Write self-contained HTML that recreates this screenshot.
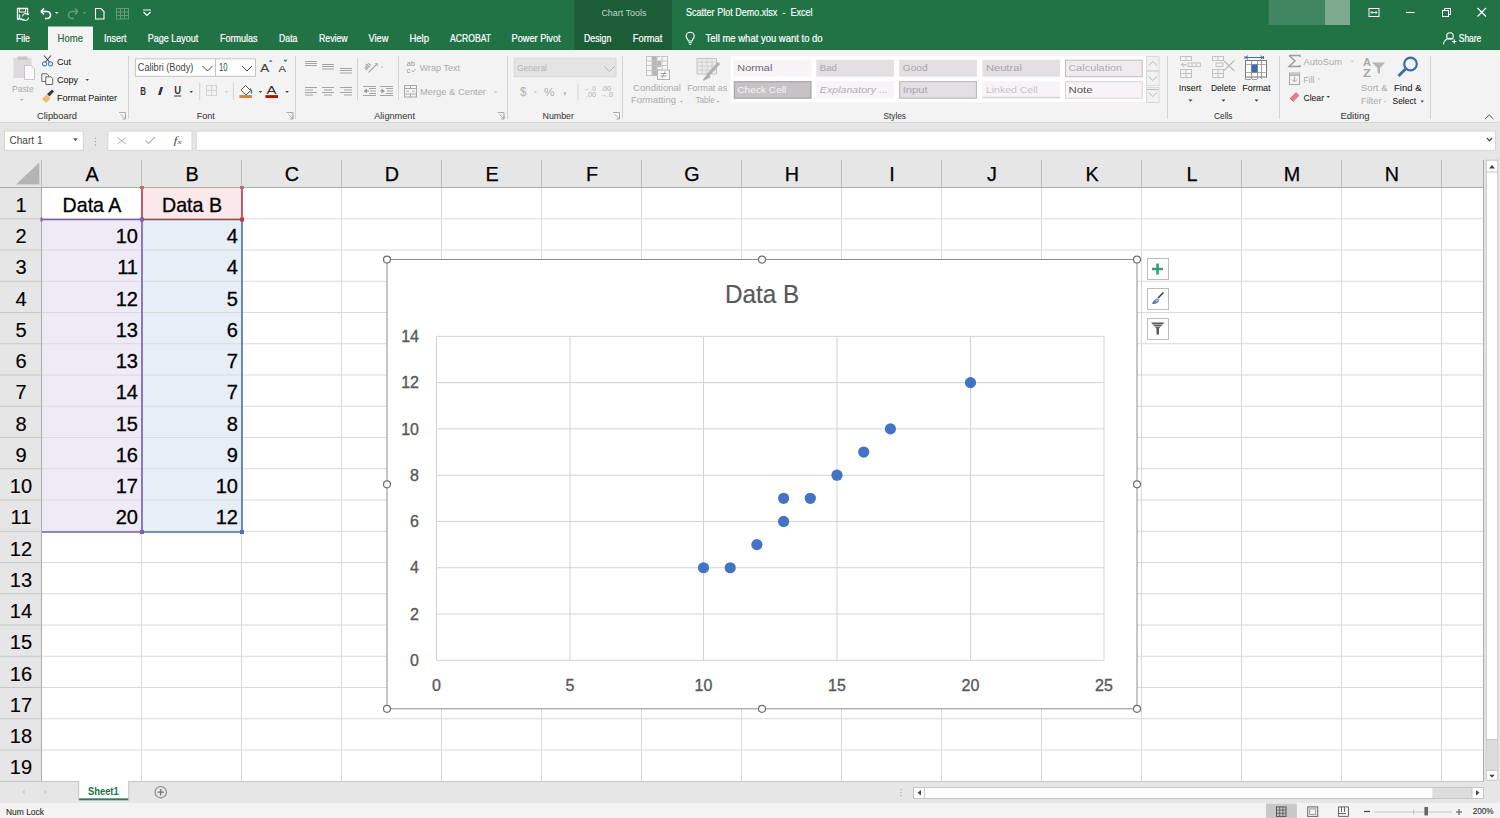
<!DOCTYPE html>
<html><head><meta charset="utf-8"><title>Excel</title>
<style>html,body{margin:0;padding:0;background:#fff;overflow:hidden}svg{display:block}text{font-family:"Liberation Sans",sans-serif}</style>
</head><body>
<svg width="1500" height="818" viewBox="0 0 1500 818">
<rect x="0" y="0" width="1500" height="50" fill="#217346" />
<rect x="574.3" y="0" width="97.5" height="50" fill="#1C5D38" />
<text x="601.4" y="16" font-size="9.88" fill="#BFD8C9" textLength="45" lengthAdjust="spacingAndGlyphs">Chart Tools</text>
<text x="686" y="16" font-size="10.47" fill="#FFFFFF" stroke="#FFFFFF" stroke-width="0.15" textLength="126.5" lengthAdjust="spacingAndGlyphs">Scatter Plot Demo.xlsx  -  Excel</text>
<rect x="48" y="26.5" width="45" height="23.5" fill="#F3F3F3" />
<text x="15.9" y="41.8" font-size="10.76" fill="#FFFFFF" stroke="#FFFFFF" stroke-width="0.2" textLength="14.0" lengthAdjust="spacingAndGlyphs">File</text>
<text x="57.5" y="41.8" font-size="10.76" fill="#2E6B47" stroke="#2E6B47" stroke-width="0.2" textLength="25.5" lengthAdjust="spacingAndGlyphs">Home</text>
<text x="104" y="41.8" font-size="10.76" fill="#FFFFFF" stroke="#FFFFFF" stroke-width="0.2" textLength="22.4" lengthAdjust="spacingAndGlyphs">Insert</text>
<text x="147.8" y="41.8" font-size="10.76" fill="#FFFFFF" stroke="#FFFFFF" stroke-width="0.2" textLength="50.4" lengthAdjust="spacingAndGlyphs">Page Layout</text>
<text x="219.9" y="41.8" font-size="10.76" fill="#FFFFFF" stroke="#FFFFFF" stroke-width="0.2" textLength="37.7" lengthAdjust="spacingAndGlyphs">Formulas</text>
<text x="279" y="41.8" font-size="10.76" fill="#FFFFFF" stroke="#FFFFFF" stroke-width="0.2" textLength="18.4" lengthAdjust="spacingAndGlyphs">Data</text>
<text x="319" y="41.8" font-size="10.76" fill="#FFFFFF" stroke="#FFFFFF" stroke-width="0.2" textLength="28.6" lengthAdjust="spacingAndGlyphs">Review</text>
<text x="368.6" y="41.8" font-size="10.76" fill="#FFFFFF" stroke="#FFFFFF" stroke-width="0.2" textLength="19.8" lengthAdjust="spacingAndGlyphs">View</text>
<text x="409.4" y="41.8" font-size="10.76" fill="#FFFFFF" stroke="#FFFFFF" stroke-width="0.2" textLength="19.6" lengthAdjust="spacingAndGlyphs">Help</text>
<text x="450" y="41.8" font-size="10.76" fill="#FFFFFF" stroke="#FFFFFF" stroke-width="0.2" textLength="41" lengthAdjust="spacingAndGlyphs">ACROBAT</text>
<text x="511.6" y="41.8" font-size="10.76" fill="#FFFFFF" stroke="#FFFFFF" stroke-width="0.2" textLength="49.0" lengthAdjust="spacingAndGlyphs">Power Pivot</text>
<text x="583.9" y="41.8" font-size="10.76" fill="#FFFFFF" stroke="#FFFFFF" stroke-width="0.2" textLength="27.4" lengthAdjust="spacingAndGlyphs">Design</text>
<text x="632.8" y="41.8" font-size="10.76" fill="#FFFFFF" stroke="#FFFFFF" stroke-width="0.2" textLength="29.5" lengthAdjust="spacingAndGlyphs">Format</text>
<text x="705.6" y="41.8" font-size="10.76" fill="#FFFFFF" stroke="#FFFFFF" stroke-width="0.2" textLength="117.0" lengthAdjust="spacingAndGlyphs">Tell me what you want to do</text>
<text x="1458.8" y="41.8" font-size="10.76" fill="#FFFFFF" stroke="#FFFFFF" stroke-width="0.2" textLength="22.5" lengthAdjust="spacingAndGlyphs">Share</text>
<rect x="0" y="50" width="1500" height="72" fill="#F3F3F3" />
<line x1="0" y1="122.5" x2="1500" y2="122.5" stroke="#D5D5D5" stroke-width="1" />
<line x1="128.5" y1="56" x2="128.5" y2="119" stroke="#D4D4D4" stroke-width="1" />
<line x1="295.5" y1="56" x2="295.5" y2="119" stroke="#D4D4D4" stroke-width="1" />
<line x1="507.5" y1="56" x2="507.5" y2="119" stroke="#D4D4D4" stroke-width="1" />
<line x1="622.5" y1="56" x2="622.5" y2="119" stroke="#D4D4D4" stroke-width="1" />
<line x1="1167.5" y1="56" x2="1167.5" y2="119" stroke="#D4D4D4" stroke-width="1" />
<line x1="1279.5" y1="56" x2="1279.5" y2="119" stroke="#D4D4D4" stroke-width="1" />
<line x1="1430.5" y1="56" x2="1430.5" y2="119" stroke="#D4D4D4" stroke-width="1" />
<text x="37" y="118.6" font-size="9.88" fill="#3A3A3A" stroke="#3A3A3A" stroke-width="0.06" textLength="40" lengthAdjust="spacingAndGlyphs">Clipboard</text>
<text x="196.8" y="118.6" font-size="9.88" fill="#3A3A3A" stroke="#3A3A3A" stroke-width="0.06" textLength="18.0" lengthAdjust="spacingAndGlyphs">Font</text>
<text x="374.2" y="118.6" font-size="9.88" fill="#3A3A3A" stroke="#3A3A3A" stroke-width="0.06" textLength="40.8" lengthAdjust="spacingAndGlyphs">Alignment</text>
<text x="542.5" y="118.6" font-size="9.88" fill="#3A3A3A" stroke="#3A3A3A" stroke-width="0.06" textLength="31.5" lengthAdjust="spacingAndGlyphs">Number</text>
<text x="883.4" y="118.6" font-size="9.88" fill="#3A3A3A" stroke="#3A3A3A" stroke-width="0.06" textLength="22.6" lengthAdjust="spacingAndGlyphs">Styles</text>
<text x="1214" y="118.6" font-size="9.88" fill="#3A3A3A" stroke="#3A3A3A" stroke-width="0.06" textLength="18.5" lengthAdjust="spacingAndGlyphs">Cells</text>
<text x="1340.5" y="118.6" font-size="9.88" fill="#3A3A3A" stroke="#3A3A3A" stroke-width="0.06" textLength="29.0" lengthAdjust="spacingAndGlyphs">Editing</text>
<path d="M22 19 H17.5 V8.5 H27.5 V14" fill="none" stroke="#FFFFFF" stroke-width="1.3" />
<rect x="19.5" y="8.5" width="6" height="3.5" fill="none" stroke="#FFFFFF" stroke-width="1" />
<line x1="19.5" y1="14.5" x2="19.5" y2="19" stroke="#FFFFFF" stroke-width="1.3" />
<path d="M22.5 16.5 a3 3 0 0 1 5.5 -1.5 M28.5 17.5 a3 3 0 0 1 -5.5 1.5" fill="none" stroke="#FFFFFF" stroke-width="1.1" />
<path d="M27 13.5 L28.5 15.5 L29.5 13.5 Z M24 20.5 L22.5 18.5 L21.5 20.5 Z" fill="#FFFFFF" />
<path d="M41 11.5 L44 8.5 M41 11.5 L44 14.5 M41 11.5 H47 a3.5 3.5 0 0 1 0 7 H45" fill="none" stroke="#FFFFFF" stroke-width="1.6" />
<path d="M55 12 L58.5 12 L56.75 14 Z" fill="#FFFFFF" />
<path d="M78 11.5 L75 8.5 M78 11.5 L75 14.5 M78 11.5 H72 a3.5 3.5 0 0 0 0 7 H74" fill="none" stroke="#5E9E79" stroke-width="1.6" />
<path d="M83 12 L86 12 L84.5 14 Z" fill="#5E9E79" />
<path d="M95.5 8.5 H101 L104 11.5 V19 H95.5 Z" fill="none" stroke="#FFFFFF" stroke-width="1.1" />
<rect x="116.5" y="8.5" width="12" height="10.5" fill="none" stroke="#5E9E79" stroke-width="1" />
<line x1="116.5" y1="12" x2="128.5" y2="12" stroke="#5E9E79" stroke-width="1" />
<line x1="116.5" y1="15.5" x2="128.5" y2="15.5" stroke="#5E9E79" stroke-width="1" />
<line x1="120.5" y1="8.5" x2="120.5" y2="19" stroke="#5E9E79" stroke-width="1" />
<line x1="124.5" y1="8.5" x2="124.5" y2="19" stroke="#5E9E79" stroke-width="1" />
<line x1="143" y1="10" x2="151" y2="10" stroke="#FFFFFF" stroke-width="1" />
<path d="M143.5 12 L147 15.5 L150.5 12" fill="none" stroke="#FFFFFF" stroke-width="1.2" />
<rect x="1268.7" y="0" width="56.3" height="25" fill="#3F8661" />
<rect x="1325" y="0" width="25" height="25" fill="#7DAA8F" />
<rect x="1369" y="8.5" width="10" height="8" fill="none" stroke="#FFFFFF" stroke-width="1" />
<path d="M1371 12.5 h6 M1371 12.5 l1.5 -1.5 M1371 12.5 l1.5 1.5 M1377 12.5 l-1.5 -1.5 M1377 12.5 l-1.5 1.5" fill="none" stroke="#FFFFFF" stroke-width="0.8" />
<line x1="1406" y1="12.5" x2="1414.5" y2="12.5" stroke="#FFFFFF" stroke-width="1.1" />
<rect x="1442.5" y="10.5" width="6" height="6" fill="none" stroke="#FFFFFF" stroke-width="1" />
<path d="M1444.5 10.5 V8.5 H1450.5 V14.5 H1448.5" fill="none" stroke="#FFFFFF" stroke-width="1" />
<path d="M1477.5 8 L1486 16.5 M1486 8 L1477.5 16.5" fill="none" stroke="#FFFFFF" stroke-width="1.2" />
<path d="M688.3 41 C688.3 39.3 686.2 38.3 686.2 36.2 A4 4 0 0 1 694.2 36.2 C694.2 38.3 692.1 39.3 692.1 41 Z" fill="none" stroke="#FFFFFF" stroke-width="1.1" />
<line x1="688.5" y1="42.7" x2="691.9" y2="42.7" stroke="#FFFFFF" stroke-width="1" />
<line x1="689.2" y1="44.3" x2="691.2" y2="44.3" stroke="#FFFFFF" stroke-width="1" />
<circle cx="1450" cy="36" r="3.3" fill="none" stroke="#FFFFFF" stroke-width="1.1"/>
<path d="M1443.5 44.5 a6.5 6.5 0 0 1 9.5 -5.5" fill="none" stroke="#FFFFFF" stroke-width="1.1" />
<path d="M1452 41.5 h4.5 M1454.25 39.25 v4.5" fill="none" stroke="#FFFFFF" stroke-width="1" />
<rect x="13.5" y="58" width="18" height="20" fill="#DDD9DD" />
<rect x="17.5" y="56.5" width="10" height="3.5" fill="#C9C5C9" />
<path d="M24.5 65.5 H31 L34.5 69 V79.5 H24.5 Z" fill="#FBF8FB" stroke="#C9C5C9" stroke-width="1" />
<text x="12" y="91.5" font-size="9.16" fill="#ABABAB" textLength="21.7" lengthAdjust="spacingAndGlyphs">Paste</text>
<path d="M20 99 L23.5 99 L21.75 101 Z" fill="#ABABAB" />
<path d="M44 55.5 L50 62.5 M51 55.5 L45 62.5" fill="none" stroke="#444444" stroke-width="1.1" />
<circle cx="44.5" cy="63.8" r="2.1" fill="none" stroke="#5B7FA6" stroke-width="1.1"/>
<circle cx="50.5" cy="63.8" r="2.1" fill="none" stroke="#5B7FA6" stroke-width="1.1"/>
<text x="57" y="64.5" font-size="9.16" fill="#262626" stroke="#262626" stroke-width="0.08" textLength="14" lengthAdjust="spacingAndGlyphs">Cut</text>
<path d="M41.8 73.8 H47 L48.5 75.3 V81.5 H41.8 Z" fill="#F7F7F7" stroke="#666666" stroke-width="1" />
<path d="M45.8 76.8 H51 L52.7 78.5 V84.5 H45.8 Z" fill="#F7F7F7" stroke="#666666" stroke-width="1" />
<text x="57" y="82.5" font-size="9.16" fill="#262626" stroke="#262626" stroke-width="0.08" textLength="21" lengthAdjust="spacingAndGlyphs">Copy</text>
<path d="M85.5 79 L89 79 L87.25 81 Z" fill="#444444" />
<path d="M42 99 L46.5 94.5 L50.5 98.5 L46 103 Z" fill="#E6C170" />
<path d="M47 94 L52 89.5 L54 91.5 L49.5 96.5 Z" fill="#3A3A3A" />
<text x="57" y="100.5" font-size="9.16" fill="#262626" stroke="#262626" stroke-width="0.08" textLength="60" lengthAdjust="spacingAndGlyphs">Format Painter</text>
<path d="M119 112.5 h6.5 v6.5 M121 114.5 l4 4 M125.5 116 v3 h-3" fill="none" stroke="#9A9A9A" stroke-width="0.8" />
<path d="M286.5 112.5 h6.5 v6.5 M288.5 114.5 l4 4 M293.0 116 v3 h-3" fill="none" stroke="#9A9A9A" stroke-width="0.8" />
<path d="M497.5 112.5 h6.5 v6.5 M499.5 114.5 l4 4 M504.0 116 v3 h-3" fill="none" stroke="#9A9A9A" stroke-width="0.8" />
<path d="M613 112.5 h6.5 v6.5 M615 114.5 l4 4 M619.5 116 v3 h-3" fill="none" stroke="#9A9A9A" stroke-width="0.8" />
<rect x="135.5" y="58.8" width="80" height="17.5" fill="#FFFFFF" stroke="#C6C6C6" stroke-width="1" />
<rect x="215.5" y="58.8" width="40" height="17.5" fill="#FFFFFF" stroke="#C6C6C6" stroke-width="1" />
<text x="137.8" y="71" font-size="10.47" fill="#444444" textLength="55.5" lengthAdjust="spacingAndGlyphs">Calibri (Body)</text>
<path d="M202.5 66 L207.5 71 L212.5 66" fill="none" stroke="#444444" stroke-width="1" />
<text x="219" y="71" font-size="10.47" fill="#444444" textLength="8.5" lengthAdjust="spacingAndGlyphs">10</text>
<path d="M242 66 L247 71 L252 66" fill="none" stroke="#444444" stroke-width="1" />
<text x="260.3" y="71.6" font-size="11.05" fill="#444444" stroke="#444444" stroke-width="0.1" textLength="9" lengthAdjust="spacingAndGlyphs">A</text>
<path d="M269.5 61.5 L272 61.5 L270.75 60 Z" fill="#5B7FA6" stroke="#5B7FA6" stroke-width="0.8" />
<text x="278.5" y="71.6" font-size="9.3" fill="#444444" stroke="#444444" stroke-width="0.1" textLength="7.5" lengthAdjust="spacingAndGlyphs">A</text>
<path d="M284 60 L287 60 L285.5 61.8 Z" fill="#5B7FA6" stroke="#5B7FA6" stroke-width="0.8" />
<text x="140.2" y="94.7" font-size="10.61" fill="#333333" textLength="5.7" lengthAdjust="spacingAndGlyphs" font-weight="bold">B</text>
<text x="157.8" y="94.7" font-size="10.61" fill="#333333" textLength="5" lengthAdjust="spacingAndGlyphs" font-weight="bold" font-style="italic">I</text>
<text x="174.2" y="94.3" font-size="10.61" fill="#333333" textLength="6.8" lengthAdjust="spacingAndGlyphs" font-weight="bold">U</text>
<line x1="174" y1="96" x2="181.2" y2="96" stroke="#333333" stroke-width="1" />
<path d="M189.5 91 L193.0 91 L191.25 93 Z" fill="#444444" />
<path d="M224.7 91 L228.2 91 L226.45 93 Z" fill="#CFCFCF" />
<path d="M258.7 91 L262.2 91 L260.45 93 Z" fill="#444444" />
<path d="M285.3 91 L288.8 91 L287.05 93 Z" fill="#444444" />
<line x1="199.7" y1="83" x2="199.7" y2="100" stroke="#D4D4D4" stroke-width="1" />
<line x1="233.4" y1="83" x2="233.4" y2="100" stroke="#D4D4D4" stroke-width="1" />
<rect x="206.5" y="85.5" width="10" height="10" fill="none" stroke="#D5D1D5" stroke-width="1" />
<line x1="211.5" y1="85.5" x2="211.5" y2="95.5" stroke="#D5D1D5" stroke-width="1" />
<line x1="206.5" y1="90.5" x2="216.5" y2="90.5" stroke="#D5D1D5" stroke-width="1" />
<path d="M241 90 L245.5 85.5 L250.5 90.5 L246 95 Z" fill="#FFFFFF" stroke="#555555" stroke-width="1" />
<path d="M250 88.5 q2 2 1.5 5" fill="none" stroke="#4F6E99" stroke-width="1.3" />
<rect x="239.4" y="95.1" width="12.5" height="2.9" fill="#D9823B" />
<text x="266.5" y="93.6" font-size="10.47" fill="#333333" textLength="10" lengthAdjust="spacingAndGlyphs">A</text>
<rect x="265.5" y="95.1" width="12.5" height="2.9" fill="#D00000" />
<line x1="305" y1="61.5" x2="317" y2="61.5" stroke="#A4A4A4" stroke-width="1" />
<line x1="305" y1="63.5" x2="317" y2="63.5" stroke="#A4A4A4" stroke-width="1" />
<line x1="305" y1="65.5" x2="317" y2="65.5" stroke="#A4A4A4" stroke-width="1" />
<line x1="322" y1="64.5" x2="334" y2="64.5" stroke="#A4A4A4" stroke-width="1" />
<line x1="322" y1="66.5" x2="334" y2="66.5" stroke="#A4A4A4" stroke-width="1" />
<line x1="322" y1="69" x2="334" y2="69" stroke="#A4A4A4" stroke-width="1" />
<line x1="340" y1="68.5" x2="352" y2="68.5" stroke="#A4A4A4" stroke-width="1" />
<line x1="340" y1="70.5" x2="352" y2="70.5" stroke="#A4A4A4" stroke-width="1" />
<line x1="340" y1="73" x2="352" y2="73" stroke="#A4A4A4" stroke-width="1" />
<line x1="305" y1="87.5" x2="317" y2="87.5" stroke="#A4A4A4" stroke-width="1" />
<line x1="322.0" y1="87.5" x2="334.0" y2="87.5" stroke="#A4A4A4" stroke-width="1" />
<line x1="340" y1="87.5" x2="352" y2="87.5" stroke="#A4A4A4" stroke-width="1" />
<line x1="305" y1="90" x2="313" y2="90" stroke="#A4A4A4" stroke-width="1" />
<line x1="324.0" y1="90" x2="332.0" y2="90" stroke="#A4A4A4" stroke-width="1" />
<line x1="344" y1="90" x2="352" y2="90" stroke="#A4A4A4" stroke-width="1" />
<line x1="305" y1="92.5" x2="317" y2="92.5" stroke="#A4A4A4" stroke-width="1" />
<line x1="322.0" y1="92.5" x2="334.0" y2="92.5" stroke="#A4A4A4" stroke-width="1" />
<line x1="340" y1="92.5" x2="352" y2="92.5" stroke="#A4A4A4" stroke-width="1" />
<line x1="305" y1="95" x2="313" y2="95" stroke="#A4A4A4" stroke-width="1" />
<line x1="324.0" y1="95" x2="332.0" y2="95" stroke="#A4A4A4" stroke-width="1" />
<line x1="344" y1="95" x2="352" y2="95" stroke="#A4A4A4" stroke-width="1" />
<line x1="357.5" y1="58" x2="357.5" y2="100" stroke="#D4D4D4" stroke-width="1" />
<text x="0" y="0" font-size="6.5" fill="#9C9C9C" font-weight="bold" transform="translate(366.5,70.5) rotate(-50)">ab</text>
<path d="M368.5 72.5 L376 65" fill="none" stroke="#A8A8A8" stroke-width="1.1" />
<path d="M375 63.5 L377.5 63.5 L377.5 66 Z" fill="#A8A8A8" stroke="#A8A8A8" stroke-width="0.6" />
<path d="M380.5 66.5 L383.5 66.5 L382 68.2 Z" fill="#BDBDBD" />
<line x1="363" y1="86.5" x2="376" y2="86.5" stroke="#A4A4A4" stroke-width="1" />
<line x1="369" y1="88.5" x2="376" y2="88.5" stroke="#A4A4A4" stroke-width="1" />
<line x1="370" y1="91" x2="376" y2="91" stroke="#A4A4A4" stroke-width="1" />
<line x1="369" y1="93.5" x2="376" y2="93.5" stroke="#A4A4A4" stroke-width="1" />
<line x1="363" y1="95.5" x2="376" y2="95.5" stroke="#A4A4A4" stroke-width="1" />
<path d="M363.5 91 L367 88.5 V93.5 Z" fill="#9C9C9C" />
<line x1="366" y1="91" x2="369" y2="91" stroke="#9C9C9C" stroke-width="1.2" />
<line x1="380" y1="86.5" x2="393" y2="86.5" stroke="#A4A4A4" stroke-width="1" />
<line x1="386" y1="88.5" x2="393" y2="88.5" stroke="#A4A4A4" stroke-width="1" />
<line x1="387" y1="91" x2="393" y2="91" stroke="#A4A4A4" stroke-width="1" />
<line x1="386" y1="93.5" x2="393" y2="93.5" stroke="#A4A4A4" stroke-width="1" />
<line x1="380" y1="95.5" x2="393" y2="95.5" stroke="#A4A4A4" stroke-width="1" />
<path d="M385 91 L381.5 88.5 V93.5 Z" fill="#9C9C9C" />
<line x1="380" y1="91" x2="382" y2="91" stroke="#9C9C9C" stroke-width="1.2" />
<line x1="398.5" y1="56" x2="398.5" y2="100" stroke="#D4D4D4" stroke-width="1" />
<text x="406.5" y="66" font-size="7.27" fill="#9A9A9A" textLength="8.5" lengthAdjust="spacingAndGlyphs">ab</text>
<text x="406.5" y="72.5" font-size="7.27" fill="#9A9A9A" textLength="4" lengthAdjust="spacingAndGlyphs">c</text>
<path d="M411.5 70.5 l1.5 1.5 l2.5 -3" fill="none" stroke="#9A9A9A" stroke-width="0.8" />
<text x="419.7" y="71" font-size="9.88" fill="#ABABAB" textLength="40.3" lengthAdjust="spacingAndGlyphs">Wrap Text</text>
<rect x="404.5" y="85.5" width="12" height="11.5" fill="none" stroke="#A8A8A8" stroke-width="1" />
<line x1="404.5" y1="88.5" x2="416.5" y2="88.5" stroke="#A8A8A8" stroke-width="1" />
<line x1="404.5" y1="94" x2="416.5" y2="94" stroke="#A8A8A8" stroke-width="1" />
<path d="M406 91.2 h3 M415 91.2 h-3" fill="none" stroke="#A8A8A8" stroke-width="0.8" />
<line x1="410.5" y1="85.5" x2="410.5" y2="88.5" stroke="#A8A8A8" stroke-width="1" />
<line x1="410.5" y1="94" x2="410.5" y2="97" stroke="#A8A8A8" stroke-width="1" />
<text x="420" y="95" font-size="9.88" fill="#ABABAB" textLength="66" lengthAdjust="spacingAndGlyphs">Merge &amp; Center</text>
<path d="M494 91 L497.5 91 L495.75 93 Z" fill="#C8C8C8" />
<rect x="514.3" y="58.2" width="101.7" height="18.5" fill="#E4E4E4" stroke="#D6D6D6" stroke-width="1" />
<text x="517" y="70.5" font-size="9.88" fill="#B5B5B5" textLength="30" lengthAdjust="spacingAndGlyphs">General</text>
<path d="M604.5 66.5 L609.5 71.5 L614.5 66.5" fill="none" stroke="#B5B5B5" stroke-width="1" />
<text x="520" y="96" font-size="12.35" fill="#AFAFAF" textLength="6.5" lengthAdjust="spacingAndGlyphs">$</text>
<path d="M534 91 L537 91 L535.5 93 Z" fill="#C8C8C8" />
<text x="544" y="96" font-size="10.9" fill="#AFAFAF" textLength="10.5" lengthAdjust="spacingAndGlyphs">%</text>
<text x="563" y="94" font-size="11.63" fill="#AFAFAF" textLength="3.5" lengthAdjust="spacingAndGlyphs" font-weight="bold">,</text>
<line x1="578" y1="84" x2="578" y2="100" stroke="#D4D4D4" stroke-width="1" />
<text x="584" y="90.5" font-size="6.54" fill="#ADADAD" textLength="12" lengthAdjust="spacingAndGlyphs">←.0</text>
<text x="586" y="96.5" font-size="6.54" fill="#ADADAD" textLength="10" lengthAdjust="spacingAndGlyphs">.00</text>
<text x="601" y="90.5" font-size="6.54" fill="#ADADAD" textLength="10" lengthAdjust="spacingAndGlyphs">.00</text>
<text x="600" y="96.5" font-size="6.54" fill="#ADADAD" textLength="13" lengthAdjust="spacingAndGlyphs">→.0</text>
<rect x="646.5" y="56.5" width="21" height="19" fill="#F6F6F6" stroke="#C4C4C4" stroke-width="1" />
<rect x="652" y="56.5" width="5" height="19" fill="#B5B5B5" />
<rect x="652" y="61" width="9" height="6" fill="#B5B5B5" />
<line x1="646.5" y1="61" x2="667.5" y2="61" stroke="#C4C4C4" stroke-width="1" />
<line x1="646.5" y1="65.5" x2="667.5" y2="65.5" stroke="#C4C4C4" stroke-width="1" />
<line x1="646.5" y1="70.5" x2="667.5" y2="70.5" stroke="#C4C4C4" stroke-width="1" />
<line x1="652" y1="56.5" x2="652" y2="75.5" stroke="#C4C4C4" stroke-width="1" />
<line x1="657" y1="56.5" x2="657" y2="75.5" stroke="#C4C4C4" stroke-width="1" />
<line x1="662" y1="56.5" x2="662" y2="75.5" stroke="#C4C4C4" stroke-width="1" />
<rect x="657.5" y="70" width="12" height="9.5" fill="#F7F7F7" stroke="#B0B0B0" stroke-width="1" />
<path d="M660.5 73.5 h6 M660.5 76 h6 M665 71.5 l-3 6.5" fill="none" stroke="#999999" stroke-width="0.9" />
<text x="633.1" y="91.4" font-size="9.88" fill="#ABABAB" textLength="47.9" lengthAdjust="spacingAndGlyphs">Conditional</text>
<text x="631" y="103" font-size="9.88" fill="#ABABAB" textLength="44.9" lengthAdjust="spacingAndGlyphs">Formatting</text>
<path d="M680 101 L683 101 L681.5 102.7 Z" fill="#ABABAB" />
<rect x="697" y="58.5" width="19.5" height="15.5" fill="#EDEAED" stroke="#C4C4C4" stroke-width="1" />
<line x1="697" y1="62" x2="716.5" y2="62" stroke="#D0D0D0" stroke-width="1" />
<line x1="697" y1="66" x2="716.5" y2="66" stroke="#D0D0D0" stroke-width="1" />
<line x1="697" y1="70" x2="716.5" y2="70" stroke="#D0D0D0" stroke-width="1" />
<line x1="702" y1="58.5" x2="702" y2="74" stroke="#D0D0D0" stroke-width="1" />
<line x1="707" y1="58.5" x2="707" y2="74" stroke="#D0D0D0" stroke-width="1" />
<line x1="712" y1="58.5" x2="712" y2="74" stroke="#D0D0D0" stroke-width="1" />
<path d="M719 63 L708 75" fill="none" stroke="#AFAFAF" stroke-width="3" />
<path d="M708 74.5 L703.5 80 L709.5 77 Z" fill="#AFAFAF" stroke="#AFAFAF" stroke-width="1.5" />
<text x="687.2" y="91.4" font-size="9.88" fill="#ABABAB" textLength="40" lengthAdjust="spacingAndGlyphs">Format as</text>
<text x="695.4" y="103" font-size="9.88" fill="#ABABAB" textLength="19.5" lengthAdjust="spacingAndGlyphs">Table</text>
<path d="M716.5 101 L719.5 101 L718 102.7 Z" fill="#ABABAB" />
<rect x="730.5" y="55.7" width="415.5" height="46.5" fill="#FFFFFF" />
<rect x="733.8" y="59.7" width="77.7" height="17" fill="#F7F3F7" />
<text x="737.3" y="71.2" font-size="9.88" fill="#666666" textLength="35" lengthAdjust="spacingAndGlyphs">Normal</text>
<rect x="816.3" y="59.7" width="77.7" height="17" fill="#E3DFE3" />
<text x="819.8" y="71.2" font-size="9.88" fill="#A8A4A8" textLength="17" lengthAdjust="spacingAndGlyphs">Bad</text>
<rect x="899.2" y="59.7" width="77.7" height="17" fill="#E3DFE3" />
<text x="902.7" y="71.2" font-size="9.88" fill="#A8A4A8" textLength="25" lengthAdjust="spacingAndGlyphs">Good</text>
<rect x="982.4" y="59.7" width="77.7" height="17" fill="#E3DFE3" />
<text x="985.9" y="71.2" font-size="9.88" fill="#A8A4A8" textLength="36" lengthAdjust="spacingAndGlyphs">Neutral</text>
<rect x="1065.5" y="60.2" width="76.7" height="16.5" fill="#EFEBEF" stroke="#BDBDBD" stroke-width="1" />
<text x="1068.5" y="71.2" font-size="9.88" fill="#B0ACB0" textLength="53.6" lengthAdjust="spacingAndGlyphs">Calculation</text>
<rect x="734.3" y="81.7" width="76.7" height="16.5" fill="#C6C2C6" stroke="#A6A6A6" stroke-width="1.2" />
<text x="737.3" y="92.7" font-size="9.88" fill="#F5F5F5" textLength="49" lengthAdjust="spacingAndGlyphs">Check Cell</text>
<rect x="816.3" y="81.2" width="77.7" height="17" fill="#F7F3F7" />
<text x="819.8" y="92.7" font-size="9.88" fill="#B4B0B4" textLength="68" lengthAdjust="spacingAndGlyphs" font-style="italic">Explanatory ...</text>
<rect x="899.7" y="81.7" width="76.7" height="16.5" fill="#E3DFE3" stroke="#B4B4B4" stroke-width="1" />
<text x="902.7" y="92.7" font-size="9.88" fill="#A8A4A8" textLength="25" lengthAdjust="spacingAndGlyphs">Input</text>
<rect x="982.4" y="81.2" width="77.7" height="17" fill="#F7F3F7" />
<text x="985.9" y="92.7" font-size="9.88" fill="#C8C4C8" textLength="52" lengthAdjust="spacingAndGlyphs">Linked Cell</text>
<rect x="1065.5" y="81.7" width="76.7" height="16.5" fill="#F7F3F7" stroke="#D6D2D6" stroke-width="1" />
<text x="1068.5" y="92.7" font-size="9.88" fill="#555555" textLength="24" lengthAdjust="spacingAndGlyphs">Note</text>
<line x1="981.5" y1="81" x2="981.5" y2="98" stroke="#FFFFFF" stroke-width="1" />
<rect x="982.4" y="96.8" width="77.7" height="1.6" fill="#D8D4D8" />
<rect x="1146.5" y="56.5" width="12.5" height="14" fill="#F1F1F1" stroke="#DADADA" stroke-width="1" />
<path d="M1148.5 65.5 L1152.75 61.5 L1157 65.5" fill="none" stroke="#BBBBBB" stroke-width="1" />
<rect x="1146.5" y="71.5" width="12.5" height="14" fill="#F1F1F1" stroke="#DADADA" stroke-width="1" />
<path d="M1148.5 76.5 L1152.75 80.5 L1157 76.5" fill="none" stroke="#BBBBBB" stroke-width="1" />
<rect x="1146.5" y="87.5" width="12.5" height="15" fill="#F1F1F1" stroke="#DADADA" stroke-width="1" />
<path d="M1148.5 92.5 L1152.75 96.5 L1157 92.5" fill="none" stroke="#BBBBBB" stroke-width="1" />
<line x1="1147" y1="89.5" x2="1158.5" y2="89.5" stroke="#BBBBBB" stroke-width="1" />
<rect x="1180.5" y="56.5" width="11" height="4" fill="none" stroke="#C2C2C2" stroke-width="1" />
<line x1="1186" y1="56.5" x2="1186" y2="60.5" stroke="#C2C2C2" stroke-width="1" />
<rect x="1188" y="63" width="12.5" height="3.5" fill="none" stroke="#C2C2C2" stroke-width="1" />
<line x1="1192" y1="63" x2="1192" y2="66.5" stroke="#C2C2C2" stroke-width="1" />
<line x1="1196" y1="63" x2="1196" y2="66.5" stroke="#C2C2C2" stroke-width="1" />
<path d="M1181.5 64.75 h5 M1181.5 64.75 l2 -2 M1181.5 64.75 l2 2" fill="none" stroke="#B0B0B0" stroke-width="1" />
<rect x="1180.5" y="69.5" width="11" height="8" fill="none" stroke="#C2C2C2" stroke-width="1" />
<line x1="1186" y1="69.5" x2="1186" y2="77.5" stroke="#C2C2C2" stroke-width="1" />
<line x1="1180.5" y1="73.5" x2="1191.5" y2="73.5" stroke="#C2C2C2" stroke-width="1" />
<text x="1178.8" y="91.4" font-size="9.16" fill="#262626" stroke="#262626" stroke-width="0.08" textLength="22.4" lengthAdjust="spacingAndGlyphs">Insert</text>
<rect x="1212.5" y="56.5" width="11" height="4" fill="none" stroke="#C2C2C2" stroke-width="1" />
<line x1="1218" y1="56.5" x2="1218" y2="60.5" stroke="#C2C2C2" stroke-width="1" />
<rect x="1216" y="63" width="7" height="3.5" fill="none" stroke="#C2C2C2" stroke-width="1" />
<path d="M1224 61 L1234.5 71 M1234.5 60.5 L1224 70.5" fill="none" stroke="#BDBDBD" stroke-width="1.2" />
<rect x="1212.5" y="69.5" width="11" height="8" fill="none" stroke="#C2C2C2" stroke-width="1" />
<line x1="1218" y1="69.5" x2="1218" y2="77.5" stroke="#C2C2C2" stroke-width="1" />
<line x1="1212.5" y1="73.5" x2="1223.5" y2="73.5" stroke="#C2C2C2" stroke-width="1" />
<text x="1210.9" y="91.4" font-size="9.16" fill="#262626" stroke="#262626" stroke-width="0.08" textLength="24.8" lengthAdjust="spacingAndGlyphs">Delete</text>
<path d="M1245.5 57.5 h17.5 M1245.5 57.5 l2.5 -1.8 M1245.5 57.5 l2.5 1.8 M1263 57.5 l-2.5 -1.8 M1263 57.5 l-2.5 1.8" fill="none" stroke="#4F6E99" stroke-width="1" />
<line x1="1245" y1="56" x2="1245" y2="59" stroke="#4F6E99" stroke-width="1" />
<line x1="1263.5" y1="56" x2="1263.5" y2="59" stroke="#4F6E99" stroke-width="1" />
<rect x="1245.5" y="60.5" width="21" height="16.5" fill="#FFFFFF" stroke="#777777" stroke-width="1" />
<line x1="1251.5" y1="60.5" x2="1251.5" y2="79" stroke="#888888" stroke-width="0.8" />
<line x1="1257.5" y1="60.5" x2="1257.5" y2="79" stroke="#888888" stroke-width="0.8" />
<line x1="1261.5" y1="60.5" x2="1261.5" y2="79" stroke="#888888" stroke-width="0.8" />
<line x1="1245.5" y1="64.5" x2="1266.5" y2="64.5" stroke="#999999" stroke-width="0.8" />
<line x1="1245.5" y1="72.5" x2="1266.5" y2="72.5" stroke="#999999" stroke-width="0.8" />
<rect x="1251.5" y="64.5" width="6" height="8" fill="#3D6DAE" />
<path d="M1245.5 77 v2.5 h5.5 M1252 79.5 h5" fill="none" stroke="#888888" stroke-width="0.8" />
<text x="1242.2" y="91.4" font-size="9.16" fill="#262626" stroke="#262626" stroke-width="0.08" textLength="28.4" lengthAdjust="spacingAndGlyphs">Format</text>
<path d="M1188.5 99.5 L1192.5 99.5 L1190.5 101.7 Z" fill="#444444" />
<path d="M1221.5 99.5 L1225.5 99.5 L1223.5 101.7 Z" fill="#444444" />
<path d="M1254.5 99.5 L1258.5 99.5 L1256.5 101.7 Z" fill="#444444" />
<path d="M1289 55.5 H1300 V57 M1289 55.5 L1295 61 L1289 66.5 H1300 V65" fill="none" stroke="#9C9C9C" stroke-width="1.4" />
<text x="1303.5" y="64.5" font-size="9.16" fill="#ABABAB" textLength="38.5" lengthAdjust="spacingAndGlyphs">AutoSum</text>
<path d="M1350.5 60.5 L1354 60.5 L1352.25 62.5 Z" fill="#C8C8C8" />
<rect x="1289.5" y="73" width="10" height="11.5" fill="none" stroke="#A8A8A8" stroke-width="1" />
<line x1="1289.5" y1="75" x2="1299.5" y2="75" stroke="#A8A8A8" stroke-width="1.5" />
<path d="M1294.5 76.5 V82 M1292 79.5 L1294.5 82 L1297 79.5" fill="none" stroke="#A8A8A8" stroke-width="1" />
<text x="1303.5" y="82.5" font-size="9.16" fill="#ABABAB" textLength="11" lengthAdjust="spacingAndGlyphs">Fill</text>
<path d="M1317.5 78.5 L1320.5 78.5 L1319 80.3 Z" fill="#C8C8C8" />
<path d="M1290 98 L1296 92 L1299.5 95.5 L1293.5 101.5 Z" fill="#E57C93" />
<path d="M1290 98 L1293.5 101.5" fill="none" stroke="#C9566F" stroke-width="1" />
<text x="1303.5" y="100.5" font-size="9.16" fill="#262626" stroke="#262626" stroke-width="0.08" textLength="20.5" lengthAdjust="spacingAndGlyphs">Clear</text>
<path d="M1326.5 96 L1330 96 L1328.25 98 Z" fill="#444444" />
<text x="1363" y="66" font-size="10.9" fill="#A8A8A8" textLength="8" lengthAdjust="spacingAndGlyphs" font-weight="bold">A</text>
<text x="1363" y="77" font-size="10.9" fill="#A8A8A8" textLength="8" lengthAdjust="spacingAndGlyphs" font-weight="bold">Z</text>
<path d="M1372 62.5 H1385 L1380 68 V74 L1377.5 72.5 V68 Z" fill="#B5B5B5" />
<text x="1361" y="91" font-size="9.16" fill="#ABABAB" textLength="26.5" lengthAdjust="spacingAndGlyphs">Sort &amp;</text>
<text x="1361" y="103.5" font-size="9.16" fill="#ABABAB" textLength="20.5" lengthAdjust="spacingAndGlyphs">Filter</text>
<path d="M1383.5 101 L1386.5 101 L1385 102.8 Z" fill="#C8C8C8" />
<circle cx="1410.5" cy="64" r="6.3" fill="none" stroke="#3E6BA6" stroke-width="2.2"/>
<path d="M1405.5 69 L1398.5 76" fill="none" stroke="#3E6BA6" stroke-width="2.8" />
<text x="1394" y="91" font-size="9.16" fill="#262626" stroke="#262626" stroke-width="0.08" textLength="27.5" lengthAdjust="spacingAndGlyphs">Find &amp;</text>
<text x="1392.5" y="103.5" font-size="9.16" fill="#262626" stroke="#262626" stroke-width="0.08" textLength="23.5" lengthAdjust="spacingAndGlyphs">Select</text>
<path d="M1420.5 100.5 L1424 100.5 L1422.25 102.5 Z" fill="#444444" />
<path d="M1485 119 L1489.25 115 L1493.5 119" fill="none" stroke="#555555" stroke-width="1" />
<rect x="0" y="123" width="1500" height="37" fill="#E6E6E6" />
<rect x="4.5" y="131" width="78.8" height="19.4" fill="#FFFFFF" stroke="#D4D4D4" stroke-width="1" />
<text x="9.5" y="144.2" font-size="10.17" fill="#444444" textLength="33" lengthAdjust="spacingAndGlyphs">Chart 1</text>
<rect x="107.8" y="131" width="84.2" height="19.4" fill="#FFFFFF" stroke="#D4D4D4" stroke-width="1" />
<rect x="196.2" y="131" width="1299.4" height="19.4" fill="#FFFFFF" stroke="#D4D4D4" stroke-width="1" />
<rect x="0" y="160" width="1483.7" height="28" fill="#E6E6E6" />
<rect x="0" y="188" width="41.5" height="593" fill="#E6E6E6" />
<rect x="42" y="188" width="1441.7" height="593" fill="#FFFFFF" />
<rect x="42" y="219.5" width="100" height="312.5" fill="#EEEBF6" />
<rect x="142" y="188" width="100" height="31.5" fill="#FBE8EA" />
<rect x="142" y="219.5" width="100" height="312.5" fill="#E8EEF8" />
<line x1="141.5" y1="188" x2="141.5" y2="781" stroke="#DADADA" stroke-width="1" />
<line x1="241.5" y1="188" x2="241.5" y2="781" stroke="#DADADA" stroke-width="1" />
<line x1="341.5" y1="188" x2="341.5" y2="781" stroke="#DADADA" stroke-width="1" />
<line x1="441.5" y1="188" x2="441.5" y2="781" stroke="#DADADA" stroke-width="1" />
<line x1="541.5" y1="188" x2="541.5" y2="781" stroke="#DADADA" stroke-width="1" />
<line x1="641.5" y1="188" x2="641.5" y2="781" stroke="#DADADA" stroke-width="1" />
<line x1="741.5" y1="188" x2="741.5" y2="781" stroke="#DADADA" stroke-width="1" />
<line x1="841.5" y1="188" x2="841.5" y2="781" stroke="#DADADA" stroke-width="1" />
<line x1="941.5" y1="188" x2="941.5" y2="781" stroke="#DADADA" stroke-width="1" />
<line x1="1041.5" y1="188" x2="1041.5" y2="781" stroke="#DADADA" stroke-width="1" />
<line x1="1141.5" y1="188" x2="1141.5" y2="781" stroke="#DADADA" stroke-width="1" />
<line x1="1241.5" y1="188" x2="1241.5" y2="781" stroke="#DADADA" stroke-width="1" />
<line x1="1341.5" y1="188" x2="1341.5" y2="781" stroke="#DADADA" stroke-width="1" />
<line x1="1441.5" y1="188" x2="1441.5" y2="781" stroke="#DADADA" stroke-width="1" />
<line x1="42" y1="218.75" x2="1483.7" y2="218.75" stroke="#DADADA" stroke-width="1" />
<line x1="42" y1="250.0" x2="1483.7" y2="250.0" stroke="#DADADA" stroke-width="1" />
<line x1="42" y1="281.25" x2="1483.7" y2="281.25" stroke="#DADADA" stroke-width="1" />
<line x1="42" y1="312.5" x2="1483.7" y2="312.5" stroke="#DADADA" stroke-width="1" />
<line x1="42" y1="343.75" x2="1483.7" y2="343.75" stroke="#DADADA" stroke-width="1" />
<line x1="42" y1="375.0" x2="1483.7" y2="375.0" stroke="#DADADA" stroke-width="1" />
<line x1="42" y1="406.25" x2="1483.7" y2="406.25" stroke="#DADADA" stroke-width="1" />
<line x1="42" y1="437.5" x2="1483.7" y2="437.5" stroke="#DADADA" stroke-width="1" />
<line x1="42" y1="468.75" x2="1483.7" y2="468.75" stroke="#DADADA" stroke-width="1" />
<line x1="42" y1="500.0" x2="1483.7" y2="500.0" stroke="#DADADA" stroke-width="1" />
<line x1="42" y1="531.25" x2="1483.7" y2="531.25" stroke="#DADADA" stroke-width="1" />
<line x1="42" y1="562.5" x2="1483.7" y2="562.5" stroke="#DADADA" stroke-width="1" />
<line x1="42" y1="593.75" x2="1483.7" y2="593.75" stroke="#DADADA" stroke-width="1" />
<line x1="42" y1="625.0" x2="1483.7" y2="625.0" stroke="#DADADA" stroke-width="1" />
<line x1="42" y1="656.25" x2="1483.7" y2="656.25" stroke="#DADADA" stroke-width="1" />
<line x1="42" y1="687.5" x2="1483.7" y2="687.5" stroke="#DADADA" stroke-width="1" />
<line x1="42" y1="718.75" x2="1483.7" y2="718.75" stroke="#DADADA" stroke-width="1" />
<line x1="42" y1="750.0" x2="1483.7" y2="750.0" stroke="#DADADA" stroke-width="1" />
<line x1="41.5" y1="160" x2="41.5" y2="188" stroke="#BDBDBD" stroke-width="1" />
<line x1="141.5" y1="160" x2="141.5" y2="188" stroke="#BDBDBD" stroke-width="1" />
<line x1="241.5" y1="160" x2="241.5" y2="188" stroke="#BDBDBD" stroke-width="1" />
<line x1="341.5" y1="160" x2="341.5" y2="188" stroke="#BDBDBD" stroke-width="1" />
<line x1="441.5" y1="160" x2="441.5" y2="188" stroke="#BDBDBD" stroke-width="1" />
<line x1="541.5" y1="160" x2="541.5" y2="188" stroke="#BDBDBD" stroke-width="1" />
<line x1="641.5" y1="160" x2="641.5" y2="188" stroke="#BDBDBD" stroke-width="1" />
<line x1="741.5" y1="160" x2="741.5" y2="188" stroke="#BDBDBD" stroke-width="1" />
<line x1="841.5" y1="160" x2="841.5" y2="188" stroke="#BDBDBD" stroke-width="1" />
<line x1="941.5" y1="160" x2="941.5" y2="188" stroke="#BDBDBD" stroke-width="1" />
<line x1="1041.5" y1="160" x2="1041.5" y2="188" stroke="#BDBDBD" stroke-width="1" />
<line x1="1141.5" y1="160" x2="1141.5" y2="188" stroke="#BDBDBD" stroke-width="1" />
<line x1="1241.5" y1="160" x2="1241.5" y2="188" stroke="#BDBDBD" stroke-width="1" />
<line x1="1341.5" y1="160" x2="1341.5" y2="188" stroke="#BDBDBD" stroke-width="1" />
<line x1="1441.5" y1="160" x2="1441.5" y2="188" stroke="#BDBDBD" stroke-width="1" />
<line x1="0" y1="187.5" x2="1483.7" y2="187.5" stroke="#ABABAB" stroke-width="1" />
<line x1="41.5" y1="188" x2="41.5" y2="781" stroke="#ABABAB" stroke-width="1" />
<line x1="0" y1="218.75" x2="41.5" y2="218.75" stroke="#C8C8C8" stroke-width="1" />
<line x1="0" y1="250.0" x2="41.5" y2="250.0" stroke="#C8C8C8" stroke-width="1" />
<line x1="0" y1="281.25" x2="41.5" y2="281.25" stroke="#C8C8C8" stroke-width="1" />
<line x1="0" y1="312.5" x2="41.5" y2="312.5" stroke="#C8C8C8" stroke-width="1" />
<line x1="0" y1="343.75" x2="41.5" y2="343.75" stroke="#C8C8C8" stroke-width="1" />
<line x1="0" y1="375.0" x2="41.5" y2="375.0" stroke="#C8C8C8" stroke-width="1" />
<line x1="0" y1="406.25" x2="41.5" y2="406.25" stroke="#C8C8C8" stroke-width="1" />
<line x1="0" y1="437.5" x2="41.5" y2="437.5" stroke="#C8C8C8" stroke-width="1" />
<line x1="0" y1="468.75" x2="41.5" y2="468.75" stroke="#C8C8C8" stroke-width="1" />
<line x1="0" y1="500.0" x2="41.5" y2="500.0" stroke="#C8C8C8" stroke-width="1" />
<line x1="0" y1="531.25" x2="41.5" y2="531.25" stroke="#C8C8C8" stroke-width="1" />
<line x1="0" y1="562.5" x2="41.5" y2="562.5" stroke="#C8C8C8" stroke-width="1" />
<line x1="0" y1="593.75" x2="41.5" y2="593.75" stroke="#C8C8C8" stroke-width="1" />
<line x1="0" y1="625.0" x2="41.5" y2="625.0" stroke="#C8C8C8" stroke-width="1" />
<line x1="0" y1="656.25" x2="41.5" y2="656.25" stroke="#C8C8C8" stroke-width="1" />
<line x1="0" y1="687.5" x2="41.5" y2="687.5" stroke="#C8C8C8" stroke-width="1" />
<line x1="0" y1="718.75" x2="41.5" y2="718.75" stroke="#C8C8C8" stroke-width="1" />
<line x1="0" y1="750.0" x2="41.5" y2="750.0" stroke="#C8C8C8" stroke-width="1" />
<text x="92.0" y="181.0" font-size="19.77" fill="#000000" stroke="#000000" stroke-width="0.25" text-anchor="middle">A</text>
<text x="192.0" y="181.0" font-size="19.77" fill="#000000" stroke="#000000" stroke-width="0.25" text-anchor="middle">B</text>
<text x="292.0" y="181.0" font-size="19.77" fill="#000000" stroke="#000000" stroke-width="0.25" text-anchor="middle">C</text>
<text x="392.0" y="181.0" font-size="19.77" fill="#000000" stroke="#000000" stroke-width="0.25" text-anchor="middle">D</text>
<text x="492.0" y="181.0" font-size="19.77" fill="#000000" stroke="#000000" stroke-width="0.25" text-anchor="middle">E</text>
<text x="592.0" y="181.0" font-size="19.77" fill="#000000" stroke="#000000" stroke-width="0.25" text-anchor="middle">F</text>
<text x="692.0" y="181.0" font-size="19.77" fill="#000000" stroke="#000000" stroke-width="0.25" text-anchor="middle">G</text>
<text x="792.0" y="181.0" font-size="19.77" fill="#000000" stroke="#000000" stroke-width="0.25" text-anchor="middle">H</text>
<text x="892.0" y="181.0" font-size="19.77" fill="#000000" stroke="#000000" stroke-width="0.25" text-anchor="middle">I</text>
<text x="992.0" y="181.0" font-size="19.77" fill="#000000" stroke="#000000" stroke-width="0.25" text-anchor="middle">J</text>
<text x="1092.0" y="181.0" font-size="19.77" fill="#000000" stroke="#000000" stroke-width="0.25" text-anchor="middle">K</text>
<text x="1192.0" y="181.0" font-size="19.77" fill="#000000" stroke="#000000" stroke-width="0.25" text-anchor="middle">L</text>
<text x="1292.0" y="181.0" font-size="19.77" fill="#000000" stroke="#000000" stroke-width="0.25" text-anchor="middle">M</text>
<text x="1392.0" y="181.0" font-size="19.77" fill="#000000" stroke="#000000" stroke-width="0.25" text-anchor="middle">N</text>
<text x="21" y="211.75" font-size="20.06" fill="#000000" stroke="#000000" stroke-width="0.15" text-anchor="middle">1</text>
<text x="21" y="243.0" font-size="20.06" fill="#000000" stroke="#000000" stroke-width="0.15" text-anchor="middle">2</text>
<text x="21" y="274.25" font-size="20.06" fill="#000000" stroke="#000000" stroke-width="0.15" text-anchor="middle">3</text>
<text x="21" y="305.5" font-size="20.06" fill="#000000" stroke="#000000" stroke-width="0.15" text-anchor="middle">4</text>
<text x="21" y="336.75" font-size="20.06" fill="#000000" stroke="#000000" stroke-width="0.15" text-anchor="middle">5</text>
<text x="21" y="368.0" font-size="20.06" fill="#000000" stroke="#000000" stroke-width="0.15" text-anchor="middle">6</text>
<text x="21" y="399.25" font-size="20.06" fill="#000000" stroke="#000000" stroke-width="0.15" text-anchor="middle">7</text>
<text x="21" y="430.5" font-size="20.06" fill="#000000" stroke="#000000" stroke-width="0.15" text-anchor="middle">8</text>
<text x="21" y="461.75" font-size="20.06" fill="#000000" stroke="#000000" stroke-width="0.15" text-anchor="middle">9</text>
<text x="21" y="493.0" font-size="20.06" fill="#000000" stroke="#000000" stroke-width="0.15" text-anchor="middle">10</text>
<text x="21" y="524.25" font-size="20.06" fill="#000000" stroke="#000000" stroke-width="0.15" text-anchor="middle">11</text>
<text x="21" y="555.5" font-size="20.06" fill="#000000" stroke="#000000" stroke-width="0.15" text-anchor="middle">12</text>
<text x="21" y="586.75" font-size="20.06" fill="#000000" stroke="#000000" stroke-width="0.15" text-anchor="middle">13</text>
<text x="21" y="618.0" font-size="20.06" fill="#000000" stroke="#000000" stroke-width="0.15" text-anchor="middle">14</text>
<text x="21" y="649.25" font-size="20.06" fill="#000000" stroke="#000000" stroke-width="0.15" text-anchor="middle">15</text>
<text x="21" y="680.5" font-size="20.06" fill="#000000" stroke="#000000" stroke-width="0.15" text-anchor="middle">16</text>
<text x="21" y="711.75" font-size="20.06" fill="#000000" stroke="#000000" stroke-width="0.15" text-anchor="middle">17</text>
<text x="21" y="743.0" font-size="20.06" fill="#000000" stroke="#000000" stroke-width="0.15" text-anchor="middle">18</text>
<text x="21" y="774.25" font-size="20.06" fill="#000000" stroke="#000000" stroke-width="0.15" text-anchor="middle">19</text>
<text x="92" y="212" font-size="19.62" fill="#000000" stroke="#000000" stroke-width="0.3" text-anchor="middle">Data A</text>
<text x="192" y="212" font-size="19.62" fill="#000000" stroke="#000000" stroke-width="0.3" text-anchor="middle">Data B</text>
<text x="138" y="243.0" font-size="20.06" fill="#000000" stroke="#000000" stroke-width="0.3" text-anchor="end">10</text>
<text x="238" y="243.0" font-size="20.06" fill="#000000" stroke="#000000" stroke-width="0.3" text-anchor="end">4</text>
<text x="138" y="274.25" font-size="20.06" fill="#000000" stroke="#000000" stroke-width="0.3" text-anchor="end">11</text>
<text x="238" y="274.25" font-size="20.06" fill="#000000" stroke="#000000" stroke-width="0.3" text-anchor="end">4</text>
<text x="138" y="305.5" font-size="20.06" fill="#000000" stroke="#000000" stroke-width="0.3" text-anchor="end">12</text>
<text x="238" y="305.5" font-size="20.06" fill="#000000" stroke="#000000" stroke-width="0.3" text-anchor="end">5</text>
<text x="138" y="336.75" font-size="20.06" fill="#000000" stroke="#000000" stroke-width="0.3" text-anchor="end">13</text>
<text x="238" y="336.75" font-size="20.06" fill="#000000" stroke="#000000" stroke-width="0.3" text-anchor="end">6</text>
<text x="138" y="368.0" font-size="20.06" fill="#000000" stroke="#000000" stroke-width="0.3" text-anchor="end">13</text>
<text x="238" y="368.0" font-size="20.06" fill="#000000" stroke="#000000" stroke-width="0.3" text-anchor="end">7</text>
<text x="138" y="399.25" font-size="20.06" fill="#000000" stroke="#000000" stroke-width="0.3" text-anchor="end">14</text>
<text x="238" y="399.25" font-size="20.06" fill="#000000" stroke="#000000" stroke-width="0.3" text-anchor="end">7</text>
<text x="138" y="430.5" font-size="20.06" fill="#000000" stroke="#000000" stroke-width="0.3" text-anchor="end">15</text>
<text x="238" y="430.5" font-size="20.06" fill="#000000" stroke="#000000" stroke-width="0.3" text-anchor="end">8</text>
<text x="138" y="461.75" font-size="20.06" fill="#000000" stroke="#000000" stroke-width="0.3" text-anchor="end">16</text>
<text x="238" y="461.75" font-size="20.06" fill="#000000" stroke="#000000" stroke-width="0.3" text-anchor="end">9</text>
<text x="138" y="493.0" font-size="20.06" fill="#000000" stroke="#000000" stroke-width="0.3" text-anchor="end">17</text>
<text x="238" y="493.0" font-size="20.06" fill="#000000" stroke="#000000" stroke-width="0.3" text-anchor="end">10</text>
<text x="138" y="524.25" font-size="20.06" fill="#000000" stroke="#000000" stroke-width="0.3" text-anchor="end">20</text>
<text x="238" y="524.25" font-size="20.06" fill="#000000" stroke="#000000" stroke-width="0.3" text-anchor="end">12</text>
<line x1="42" y1="219.5" x2="142" y2="219.5" stroke="#7560A4" stroke-width="1.6" />
<line x1="142" y1="219.5" x2="142" y2="532" stroke="#7560A4" stroke-width="1.6" />
<line x1="42" y1="532" x2="142" y2="532" stroke="#7560A4" stroke-width="1.6" />
<line x1="142" y1="188" x2="142" y2="219.5" stroke="#B8364E" stroke-width="1.6" />
<line x1="242" y1="188" x2="242" y2="219.5" stroke="#B8364E" stroke-width="1.6" />
<line x1="142" y1="219.5" x2="242" y2="219.5" stroke="#B8364E" stroke-width="1.6" />
<line x1="242" y1="219.5" x2="242" y2="532" stroke="#4A6EA8" stroke-width="1.6" />
<line x1="142" y1="532" x2="242" y2="532" stroke="#4A6EA8" stroke-width="1.6" />
<rect x="387" y="259.5" width="750" height="449.3" fill="#FFFFFF" stroke="#8E8E8E" stroke-width="1" />
<line x1="436.5" y1="336.3" x2="436.5" y2="660.3" stroke="#D3D3D3" stroke-width="1" />
<text x="436.5" y="691.1" font-size="15.99" fill="#595959" stroke="#595959" stroke-width="0.35" text-anchor="middle">0</text>
<line x1="570.0" y1="336.3" x2="570.0" y2="660.3" stroke="#D3D3D3" stroke-width="1" />
<text x="570.0" y="691.1" font-size="15.99" fill="#595959" stroke="#595959" stroke-width="0.35" text-anchor="middle">5</text>
<line x1="703.5" y1="336.3" x2="703.5" y2="660.3" stroke="#D3D3D3" stroke-width="1" />
<text x="703.5" y="691.1" font-size="15.99" fill="#595959" stroke="#595959" stroke-width="0.35" text-anchor="middle">10</text>
<line x1="837.0" y1="336.3" x2="837.0" y2="660.3" stroke="#D3D3D3" stroke-width="1" />
<text x="837.0" y="691.1" font-size="15.99" fill="#595959" stroke="#595959" stroke-width="0.35" text-anchor="middle">15</text>
<line x1="970.5" y1="336.3" x2="970.5" y2="660.3" stroke="#D3D3D3" stroke-width="1" />
<text x="970.5" y="691.1" font-size="15.99" fill="#595959" stroke="#595959" stroke-width="0.35" text-anchor="middle">20</text>
<line x1="1104.0" y1="336.3" x2="1104.0" y2="660.3" stroke="#D3D3D3" stroke-width="1" />
<text x="1104.0" y="691.1" font-size="15.99" fill="#595959" stroke="#595959" stroke-width="0.35" text-anchor="middle">25</text>
<line x1="436.5" y1="660.3" x2="1104.0" y2="660.3" stroke="#D3D3D3" stroke-width="1" />
<text x="419" y="665.9" font-size="15.99" fill="#595959" stroke="#595959" stroke-width="0.35" text-anchor="end">0</text>
<line x1="436.5" y1="614.02" x2="1104.0" y2="614.02" stroke="#D3D3D3" stroke-width="1" />
<text x="419" y="619.62" font-size="15.99" fill="#595959" stroke="#595959" stroke-width="0.35" text-anchor="end">2</text>
<line x1="436.5" y1="567.74" x2="1104.0" y2="567.74" stroke="#D3D3D3" stroke-width="1" />
<text x="419" y="573.34" font-size="15.99" fill="#595959" stroke="#595959" stroke-width="0.35" text-anchor="end">4</text>
<line x1="436.5" y1="521.4599999999999" x2="1104.0" y2="521.4599999999999" stroke="#D3D3D3" stroke-width="1" />
<text x="419" y="527.06" font-size="15.99" fill="#595959" stroke="#595959" stroke-width="0.35" text-anchor="end">6</text>
<line x1="436.5" y1="475.17999999999995" x2="1104.0" y2="475.17999999999995" stroke="#D3D3D3" stroke-width="1" />
<text x="419" y="480.78" font-size="15.99" fill="#595959" stroke="#595959" stroke-width="0.35" text-anchor="end">8</text>
<line x1="436.5" y1="428.9" x2="1104.0" y2="428.9" stroke="#D3D3D3" stroke-width="1" />
<text x="419" y="434.5" font-size="15.99" fill="#595959" stroke="#595959" stroke-width="0.35" text-anchor="end">10</text>
<line x1="436.5" y1="382.61999999999995" x2="1104.0" y2="382.61999999999995" stroke="#D3D3D3" stroke-width="1" />
<text x="419" y="388.21999999999997" font-size="15.99" fill="#595959" stroke="#595959" stroke-width="0.35" text-anchor="end">12</text>
<line x1="436.5" y1="336.3399999999999" x2="1104.0" y2="336.3399999999999" stroke="#D3D3D3" stroke-width="1" />
<text x="419" y="341.93999999999994" font-size="15.99" fill="#595959" stroke="#595959" stroke-width="0.35" text-anchor="end">14</text>
<text x="725" y="303" font-size="26.02" fill="#595959" stroke="#595959" stroke-width="0.2" textLength="74.2" lengthAdjust="spacingAndGlyphs">Data B</text>
<circle cx="703.5" cy="567.74" r="5.6" fill="#4472C4"/>
<circle cx="730.2" cy="567.74" r="5.6" fill="#4472C4"/>
<circle cx="756.9" cy="544.5999999999999" r="5.6" fill="#4472C4"/>
<circle cx="783.5999999999999" cy="521.4599999999999" r="5.6" fill="#4472C4"/>
<circle cx="783.5999999999999" cy="498.31999999999994" r="5.6" fill="#4472C4"/>
<circle cx="810.3" cy="498.31999999999994" r="5.6" fill="#4472C4"/>
<circle cx="837.0" cy="475.17999999999995" r="5.6" fill="#4472C4"/>
<circle cx="863.7" cy="452.03999999999996" r="5.6" fill="#4472C4"/>
<circle cx="890.4" cy="428.9" r="5.6" fill="#4472C4"/>
<circle cx="970.5" cy="382.61999999999995" r="5.6" fill="#4472C4"/>
<circle cx="387" cy="259.6" r="3.5" fill="#FFFFFF" stroke="#707070" stroke-width="1.2"/>
<circle cx="762" cy="259.6" r="3.5" fill="#FFFFFF" stroke="#707070" stroke-width="1.2"/>
<circle cx="1137" cy="259.6" r="3.5" fill="#FFFFFF" stroke="#707070" stroke-width="1.2"/>
<circle cx="387" cy="484.3" r="3.5" fill="#FFFFFF" stroke="#707070" stroke-width="1.2"/>
<circle cx="1137" cy="484.3" r="3.5" fill="#FFFFFF" stroke="#707070" stroke-width="1.2"/>
<circle cx="387" cy="708.8" r="3.5" fill="#FFFFFF" stroke="#707070" stroke-width="1.2"/>
<circle cx="762" cy="708.8" r="3.5" fill="#FFFFFF" stroke="#707070" stroke-width="1.2"/>
<circle cx="1137" cy="708.8" r="3.5" fill="#FFFFFF" stroke="#707070" stroke-width="1.2"/>
<rect x="1147.5" y="258.5" width="21" height="21" fill="#FFFFFF" stroke="#BDBDBD" stroke-width="1" />
<rect x="1147.5" y="288.5" width="21" height="21" fill="#FFFFFF" stroke="#BDBDBD" stroke-width="1" />
<rect x="1147.5" y="318.5" width="21" height="21" fill="#FFFFFF" stroke="#BDBDBD" stroke-width="1" />
<rect x="0" y="781" width="1500" height="22.3" fill="#E6E6E6" />
<line x1="0" y1="781.5" x2="1483.7" y2="781.5" stroke="#C6C6C6" stroke-width="1" />
<rect x="78.7" y="781" width="50" height="19" fill="#FFFFFF" />
<rect x="78.7" y="798.3" width="50" height="2" fill="#3A7A57" />
<text x="88" y="795" font-size="11.34" fill="#217346" textLength="30.7" lengthAdjust="spacingAndGlyphs" font-weight="bold">Sheet1</text>
<rect x="0" y="803.3" width="1500" height="15" fill="#F3F3F3" />
<text x="6" y="814.7" font-size="9.59" fill="#333333" stroke="#333333" stroke-width="0.15" textLength="38" lengthAdjust="spacingAndGlyphs">Num Lock</text>
<text x="1472.8" y="814.2" font-size="9.59" fill="#333333" stroke="#333333" stroke-width="0.15" textLength="20.8" lengthAdjust="spacingAndGlyphs">200%</text>
<rect x="1483.7" y="160" width="16.3" height="621" fill="#E6E6E6" />
<rect x="1486.3" y="160.2" width="11.4" height="620" fill="#FFFFFF" stroke="#C6C6C6" stroke-width="1" />
<path d="M73.3 138.3 H77.7 L75.5 141.3 Z" fill="#555555" />
<rect x="94.8" y="137.5" width="1.2" height="1.2" fill="#9A9A9A" />
<rect x="94.8" y="141" width="1.2" height="1.2" fill="#9A9A9A" />
<rect x="94.8" y="144.5" width="1.2" height="1.2" fill="#9A9A9A" />
<path d="M117.5 137.5 L126 144 M126 137.5 L117.5 144" fill="none" stroke="#B5B5B5" stroke-width="1" />
<path d="M145.5 140.5 L148.5 143.5 L155 137" fill="none" stroke="#B5B5B5" stroke-width="1.1" />
<text x="173.5" y="143.5" font-size="10.17" fill="#555555" textLength="4" lengthAdjust="spacingAndGlyphs" font-style="italic" style="font-family:&quot;Liberation Serif&quot;,serif">f</text>
<text x="177.3" y="144.3" font-size="6.54" fill="#555555" textLength="4.5" lengthAdjust="spacingAndGlyphs" font-style="italic" style="font-family:&quot;Liberation Serif&quot;,serif">x</text>
<path d="M1487 138 L1489.5 140.8 L1492 138" fill="none" stroke="#444444" stroke-width="1.2" />
<path d="M16 184.5 L39.3 184.5 L39.3 162.5 Z" fill="#B4B4B4" />
<rect x="140" y="217.5" width="4" height="4" fill="#7F62A8" />
<rect x="240" y="217.5" width="4" height="4" fill="#C0394F" />
<rect x="140" y="186" width="4" height="3" fill="#B07080" />
<rect x="240" y="186" width="4" height="3" fill="#B07080" />
<rect x="240" y="530" width="4" height="4" fill="#4A72B0" />
<rect x="140" y="530" width="4" height="4" fill="#7F62A8" />
<rect x="40.5" y="217.5" width="2" height="4" fill="#7F62A8" />
<path d="M1157.5 263.5 V274.5 M1152 269 H1163" fill="none" stroke="#3D9A74" stroke-width="2.6" />
<path d="M1163.5 292.5 L1158 298" fill="none" stroke="#444444" stroke-width="1.6" />
<path d="M1152 304 C1153 301 1155 298.5 1157.5 298.5 L1159 300 C1159 302.5 1156 304 1152 304 Z" fill="#4F7BB0" />
<circle cx="1156.6" cy="300.6" r="1.1" fill="#D8E6F5"/>
<path d="M1151 322.5 H1164.5 L1159 328.5 V334.5 H1156.5 V328.5 Z" fill="#5A5A5A" />
<line x1="1152.5" y1="324.6" x2="1163" y2="324.6" stroke="#E8E8E8" stroke-width="0.6" />
<line x1="1154.3" y1="326.6" x2="1161.2" y2="326.6" stroke="#E8E8E8" stroke-width="0.6" />
<path d="M24.5 789.5 L22 792 L24.5 794.5 Z" fill="#C8C8C8" />
<path d="M44.5 789.5 L47 792 L44.5 794.5 Z" fill="#C8C8C8" />
<circle cx="160.7" cy="792.2" r="5.7" fill="none" stroke="#888888" stroke-width="1.1"/>
<path d="M157.5 792.2 H164 M160.7 789 V795.5" fill="none" stroke="#777777" stroke-width="1.3" />
<line x1="128.7" y1="781" x2="128.7" y2="800" stroke="#C6C6C6" stroke-width="1" />
<line x1="78.7" y1="781" x2="78.7" y2="800" stroke="#C6C6C6" stroke-width="1" />
<rect x="900.3" y="789" width="1.1" height="1.1" fill="#A8A8A8" />
<rect x="900.3" y="792" width="1.1" height="1.1" fill="#A8A8A8" />
<rect x="900.3" y="795" width="1.1" height="1.1" fill="#A8A8A8" />
<rect x="913.5" y="787.5" width="558.5" height="11" fill="#FFFFFF" stroke="#C6C6C6" stroke-width="1" />
<rect x="1432.4" y="788" width="39.5" height="10" fill="#DDDDDD" />
<line x1="924.4" y1="787.5" x2="924.4" y2="798.5" stroke="#C6C6C6" stroke-width="1" />
<path d="M921 790 L917.5 792.7 L921 795.4 Z" fill="#444444" />
<rect x="1472" y="787.5" width="11.5" height="11" fill="#FFFFFF" stroke="#C6C6C6" stroke-width="1" />
<path d="M1476 790 L1479.5 792.7 L1476 795.4 Z" fill="#444444" />
<line x1="1486.3" y1="172" x2="1497.7" y2="172" stroke="#C6C6C6" stroke-width="1" />
<path d="M1489 168.5 L1492 165 L1495 168.5 Z" fill="#444444" />
<rect x="1486.8" y="739.7" width="10.4" height="30.8" fill="#DCDCDC" />
<line x1="1486.3" y1="739.5" x2="1497.7" y2="739.5" stroke="#C6C6C6" stroke-width="1" />
<line x1="1486.3" y1="770.5" x2="1497.7" y2="770.5" stroke="#C6C6C6" stroke-width="1" />
<path d="M1489.2 774.8 L1492 777.8 L1494.8 774.8 Z" fill="#444444" />
<line x1="1483.5" y1="160" x2="1483.5" y2="781" stroke="#ABABAB" stroke-width="1" />
<rect x="1266" y="803.6" width="30.8" height="14.4" fill="#C8C8C8" />
<rect x="1276.5" y="806.9" width="9.5" height="9.5" fill="none" stroke="#555555" stroke-width="1" />
<line x1="1279.7" y1="806.9" x2="1279.7" y2="816.4" stroke="#555555" stroke-width="0.8" />
<line x1="1282.9" y1="806.9" x2="1282.9" y2="816.4" stroke="#555555" stroke-width="0.8" />
<line x1="1276.5" y1="810.1" x2="1286" y2="810.1" stroke="#555555" stroke-width="0.8" />
<line x1="1276.5" y1="813.3" x2="1286" y2="813.3" stroke="#555555" stroke-width="0.8" />
<rect x="1307.7" y="806.9" width="10" height="9.5" fill="none" stroke="#666666" stroke-width="1" />
<rect x="1309.7" y="808.9" width="6" height="5.5" fill="none" stroke="#888888" stroke-width="0.8" />
<path d="M1338.5 806.9 H1348.5 V816.4 H1338.5 Z M1341.5 806.9 V812 M1344.5 806.9 V812 M1338.5 813.5 H1346" fill="none" stroke="#666666" stroke-width="1" />
<line x1="1364" y1="811.5" x2="1370" y2="811.5" stroke="#444444" stroke-width="1.2" />
<line x1="1374.4" y1="812" x2="1452" y2="812" stroke="#C6C6C6" stroke-width="1.2" />
<line x1="1413.6" y1="809.5" x2="1413.6" y2="814.5" stroke="#B5B5B5" stroke-width="0.8" />
<rect x="1424.4" y="807" width="3.6" height="8.4" fill="#666666" />
<path d="M1456 812 H1462 M1459 809 V815" fill="none" stroke="#555555" stroke-width="1.1" />
</svg>
</body></html>
